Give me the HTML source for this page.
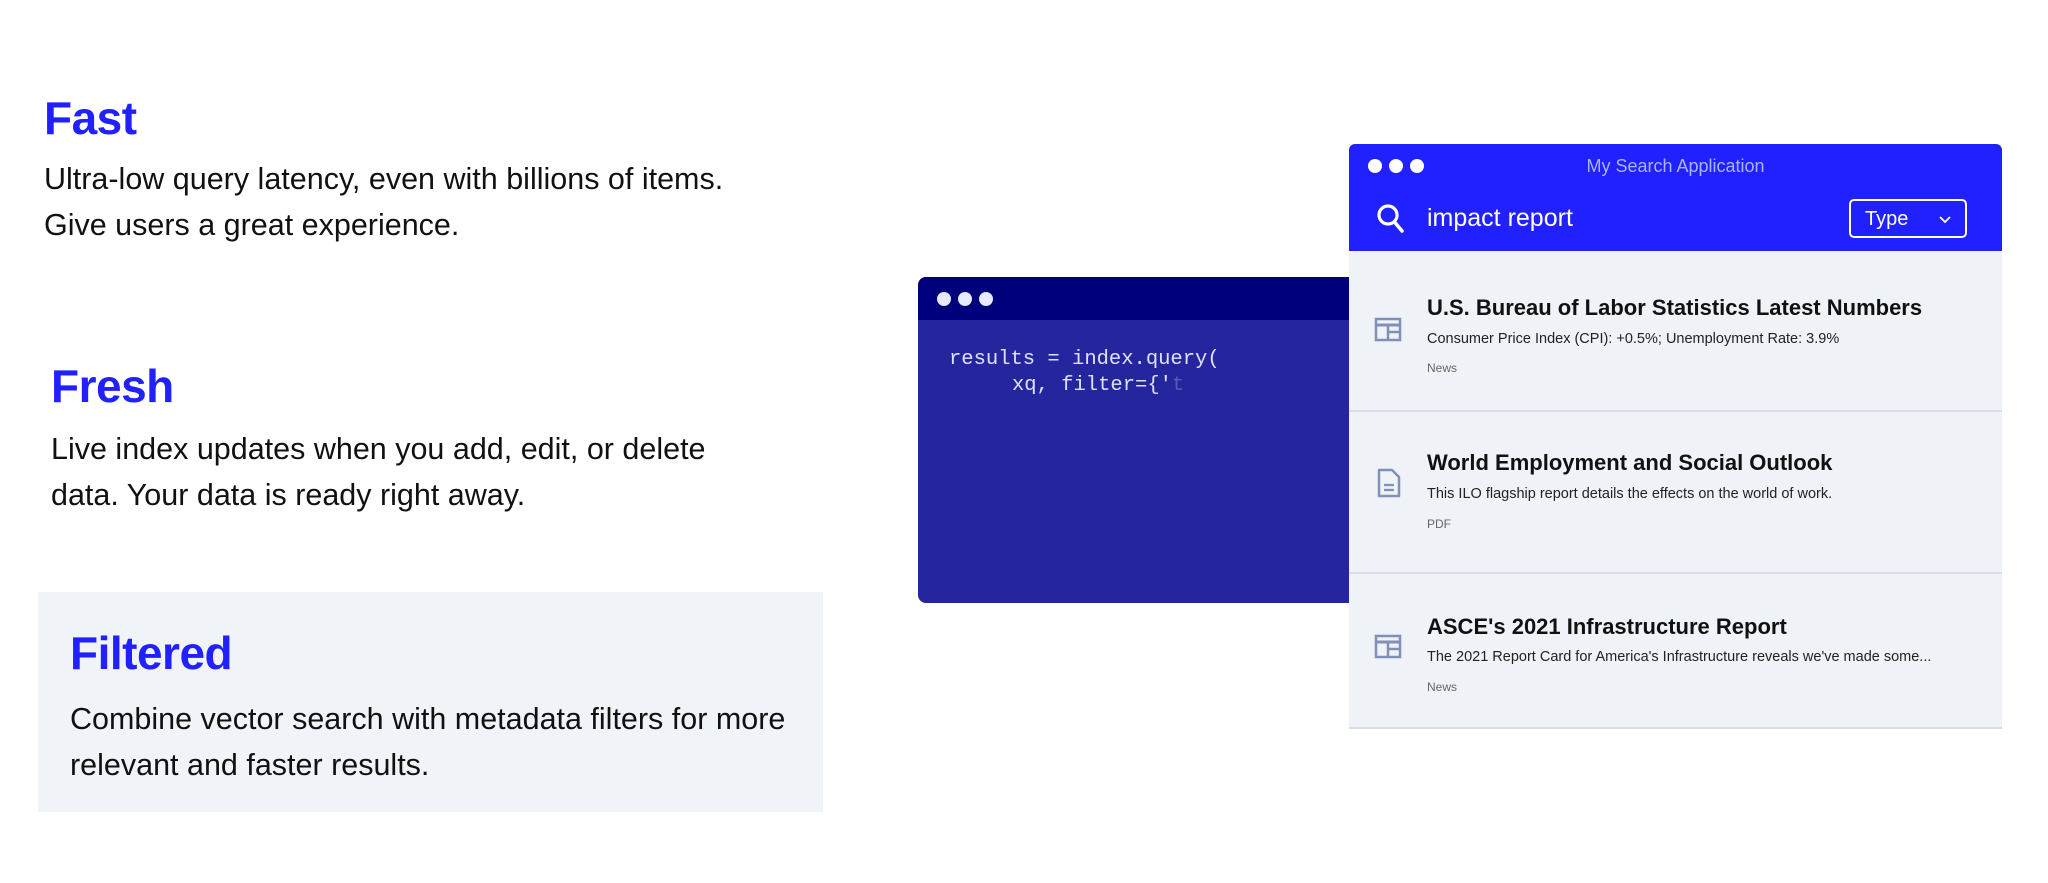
<!DOCTYPE html>
<html><head><meta charset="utf-8"><style>
*{margin:0;padding:0;box-sizing:border-box}
body{width:2048px;height:883px;background:#fff;position:relative;overflow:hidden;font-family:"Liberation Sans",sans-serif;color:#111}
.a{position:absolute;white-space:nowrap}
h2{position:absolute;font-size:46px;font-weight:bold;color:#2121ff;letter-spacing:-0.5px;line-height:1}
.p{position:absolute;font-size:30.5px;line-height:46px;color:#111;white-space:nowrap}
.box{position:absolute;left:38px;top:592px;width:785px;height:220px;background:#f0f3f7}
.code{position:absolute;left:918px;top:277px;width:440px;height:326px;background:#25259e;border-radius:8px;overflow:hidden}
.code .hd{height:43px;background:#00007d}
.dot{position:absolute;width:14px;height:14px;border-radius:50%;background:#e6e9ff}
.mono{font-family:"Liberation Mono",monospace;font-size:20.5px;color:#dfe2ff}
.app{position:absolute;left:1349px;top:144px;width:653px;height:585px;background:#eff2f6;border-radius:6px 6px 0 0;overflow:hidden}
.app .hd{position:absolute;left:0;top:0;width:100%;height:107px;background:#2121ff}
.div{position:absolute;left:0;width:100%;height:2px;background:#d9dee6}
.t{position:absolute;left:78px;font-size:22px;font-weight:bold;color:#111;white-space:nowrap}
.s{position:absolute;left:78px;font-size:14.5px;color:#222;white-space:nowrap}
.g{position:absolute;left:78px;font-size:12px;color:#666}
.ic{position:absolute;left:25px}
</style></head><body>
<h2 style="left:44px;top:95px">Fast</h2>
<div class="p" style="left:44px;top:156px">Ultra-low query latency, even with billions of items.<br>Give users a great experience.</div>
<h2 style="left:51px;top:363px">Fresh</h2>
<div class="p" style="left:51px;top:426px">Live index updates when you add, edit, or delete<br>data. Your data is ready right away.</div>
<div class="box"></div>
<h2 style="left:70px;top:630px">Filtered</h2>
<div class="p" style="left:70px;top:696px">Combine vector search with metadata filters for more<br>relevant and faster results.</div>

<div class="code"><div class="hd"></div>
<div class="dot" style="left:19px;top:15px"></div><div class="dot" style="left:40px;top:15px"></div><div class="dot" style="left:61px;top:15px"></div>
<div class="a mono" style="left:31px;top:71px">results = index.query(</div>
<div class="a mono" style="left:94px;top:97px">xq, filter={'<span style="color:#5a5ab8">t</span></div>
</div>

<div class="app">
<div class="hd">
<div class="dot" style="left:19px;top:15px;background:#fff"></div><div class="dot" style="left:40px;top:15px;background:#fff"></div><div class="dot" style="left:61px;top:15px;background:#fff"></div>
<div class="a" style="left:0;width:100%;text-align:center;top:12px;font-size:18px;color:#aab3ff">My Search Application</div>
<svg class="a" style="left:27px;top:59px" width="30" height="32" viewBox="0 0 30 32"><circle cx="12" cy="12" r="9" fill="none" stroke="#fff" stroke-width="3.2"/><line x1="18.5" y1="19" x2="26" y2="28" stroke="#fff" stroke-width="3.6" stroke-linecap="round"/></svg>
<div class="a" style="left:78px;top:60px;font-size:25px;color:#fff">impact report</div>
<div class="a" style="left:500px;top:55px;width:118px;height:39px;border:2px solid #fff;border-radius:5px;color:#fff;font-size:20px;padding:7px 0 0 14px">Type<svg style="position:absolute;right:14px;top:15px" width="12" height="8" viewBox="0 0 12 8"><path d="M1 1l5 5 5-5" fill="none" stroke="#fff" stroke-width="1.8"/></svg></div>
</div>
<svg class="ic" style="top:172px" width="28" height="26" viewBox="0 0 28 26"><rect x="2" y="3" width="24" height="21" fill="none" stroke="#8090b8" stroke-width="2.5"/><line x1="2" y1="9" x2="26" y2="9" stroke="#8090b8" stroke-width="3"/><line x1="14" y1="9" x2="14" y2="24" stroke="#8090b8" stroke-width="2.5"/><line x1="14" y1="16" x2="26" y2="16" stroke="#8090b8" stroke-width="2.5"/></svg>
<div class="t" style="top:151px">U.S. Bureau of Labor Statistics Latest Numbers</div>
<div class="s" style="top:187px">Consumer Price Index (CPI): +0.5%; Unemployment Rate: 3.9%</div>
<div class="g" style="top:217px">News</div>
<div class="div" style="top:266px"></div>
<svg class="ic" style="top:324px;left:28px" width="24" height="30" viewBox="0 0 24 30"><path d="M2 2h13l7 7v19H2z" fill="none" stroke="#8090b8" stroke-width="2.5" stroke-linejoin="round"/><line x1="7" y1="17" x2="17" y2="17" stroke="#8090b8" stroke-width="2.3"/><line x1="7" y1="22" x2="17" y2="22" stroke="#8090b8" stroke-width="2.3"/></svg>
<div class="t" style="top:306px">World Employment and Social Outlook</div>
<div class="s" style="top:342px">This ILO flagship report details the effects on the world of work.</div>
<div class="g" style="top:373px">PDF</div>
<div class="div" style="top:428px"></div>
<svg class="ic" style="top:489px" width="28" height="26" viewBox="0 0 28 26"><rect x="2" y="3" width="24" height="21" fill="none" stroke="#8090b8" stroke-width="2.5"/><line x1="2" y1="9" x2="26" y2="9" stroke="#8090b8" stroke-width="3"/><line x1="14" y1="9" x2="14" y2="24" stroke="#8090b8" stroke-width="2.5"/><line x1="14" y1="16" x2="26" y2="16" stroke="#8090b8" stroke-width="2.5"/></svg>
<div class="t" style="top:470px">ASCE's 2021 Infrastructure Report</div>
<div class="s" style="top:505px">The 2021 Report Card for America's Infrastructure reveals we've made some...</div>
<div class="g" style="top:536px">News</div>
<div class="div" style="top:583px"></div>
</div>
</body></html>
